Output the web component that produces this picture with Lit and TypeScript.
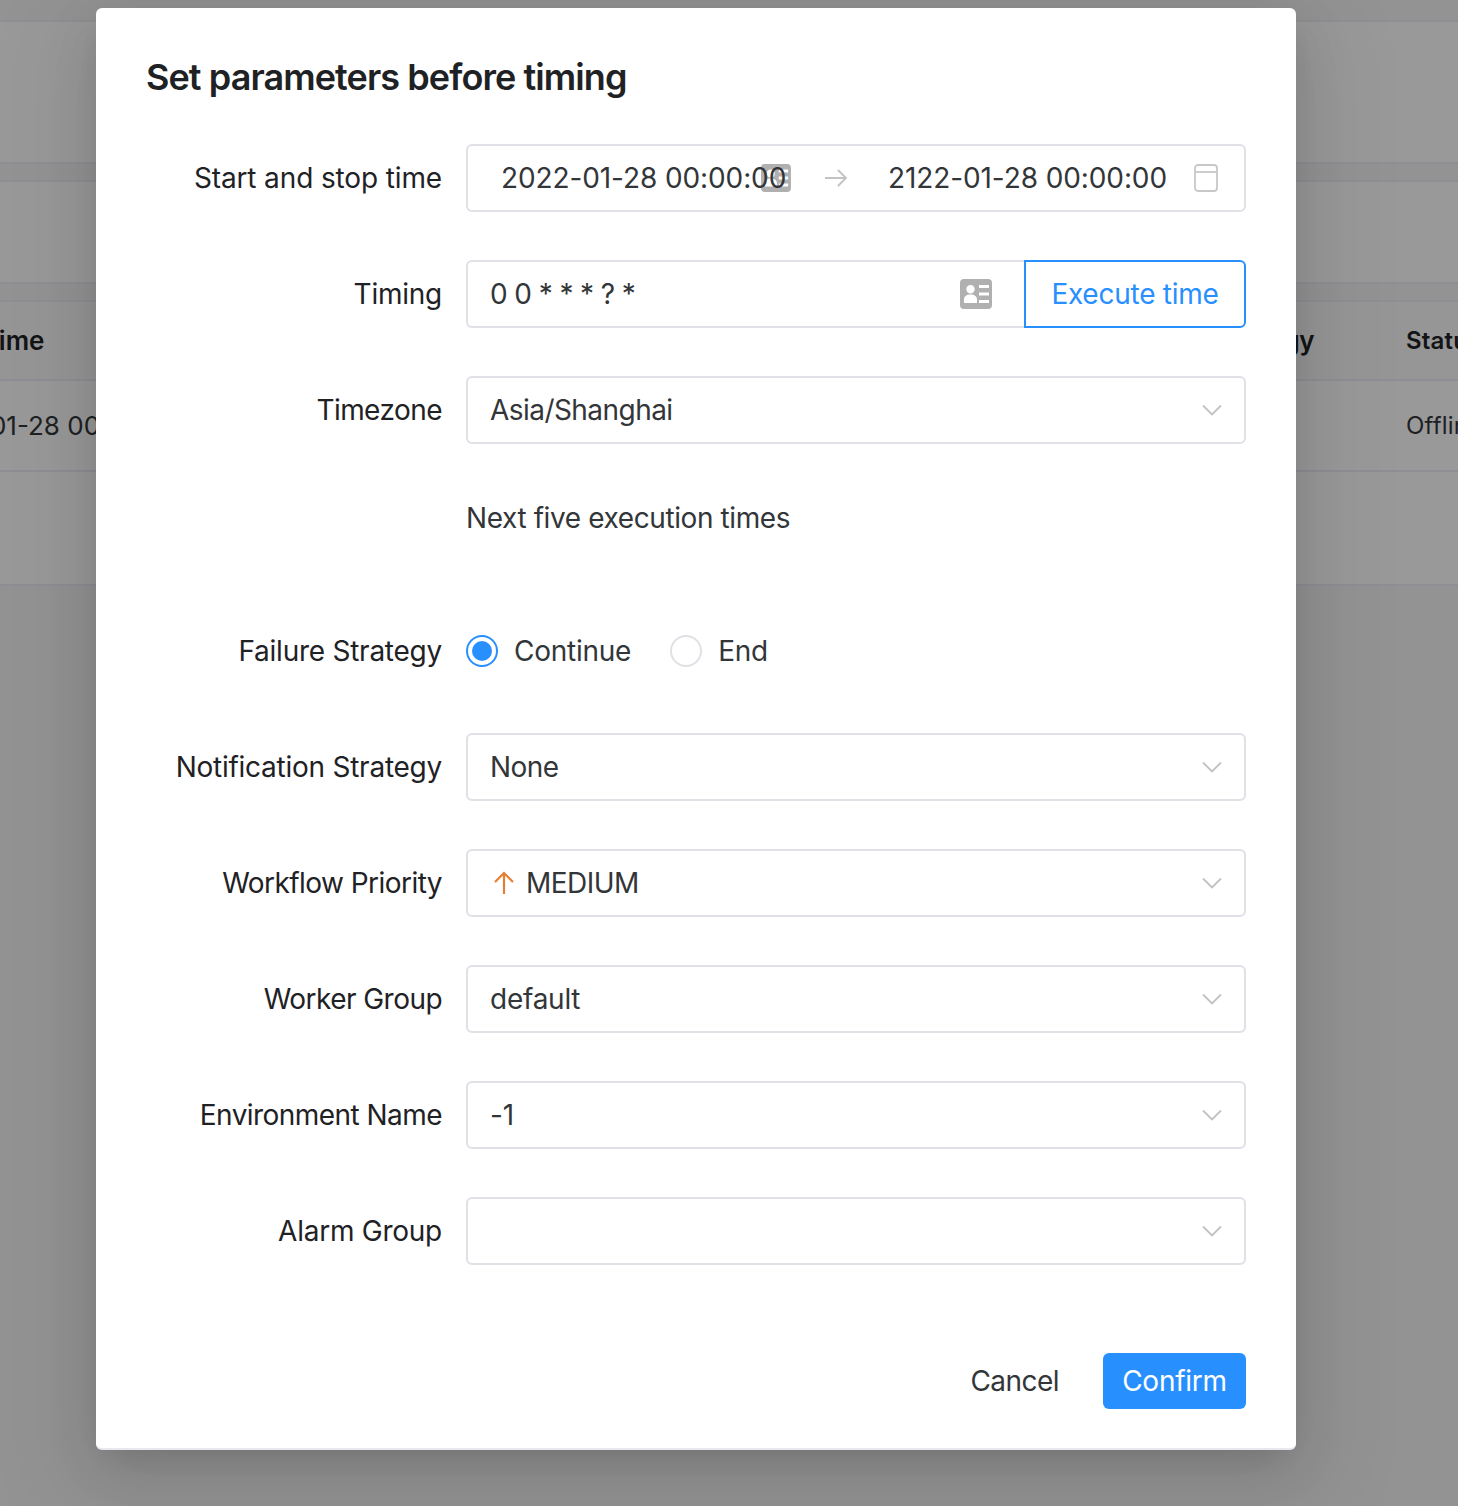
import { LitElement, html, css } from "lit";
import { customElement } from "lit/decorators.js";

const chevron = html`<svg class="chev" viewBox="0 0 20 12" fill="none" stroke="#c2c2c2" stroke-width="1.8"><path d="M1 1.5l9 9 9-9"/></svg>`;
const card = (cls: string) => html`<svg class=${cls} viewBox="0 0 32 30"><path fill="#b0b0b0" fill-rule="evenodd" d="M4 0h24a4 4 0 0 1 4 4v22a4 4 0 0 1-4 4H4a4 4 0 0 1-4-4V4a4 4 0 0 1 4-4zM10.500 6a4.200 4.200 0 1 0 0 8.400 4.200 4.200 0 0 0 0-8.400zM4 24h13v-3.500c0-3-2.500-5-6.500-5s-6.500 2-6.500 5zM19 6v3h10V6zM19 13.500v3h10v-3zM19 21v3h10v-3z"/></svg>`;

@customElement("app-root")
export class AppRoot extends LitElement {
  static styles = css`
    :host { display: block; position: relative; width: 1458px; height: 1506px; overflow: hidden; background: #f5f5f7;
      font-family: Inter, "Liberation Sans", sans-serif; font-size: 28px; color: #333639; letter-spacing: -.25px; }
    .bg { display: flex; flex-direction: column; gap: 16px; padding-top: 20px; font-size: 26px; letter-spacing: 0; }
    .band { background: #fff; border-top: 2px solid #efeff5; border-bottom: 2px solid #efeff5; }
    .b1 { height: 140px; }
    .b2 { height: 100px; }
    .b3 { height: 282px; }
    .tr { display: flex; align-items: center; margin-left: -86px; white-space: nowrap; }
    .tr.head { height: 79px; padding-bottom: 1px; font-weight: 600; color: #1f2225; background: #fafafc; border-bottom: 2px solid #efeff5; box-sizing: border-box; }
    .tr.body { height: 91px; border-bottom: 2px solid #efeff5; box-sizing: border-box; }
    .c1 { width: 1190px; flex: none; }
    .c2 { width: 302px; flex: none; }
    .c3 { flex: none; font-size: 24px; letter-spacing: .2px; }
    .head .c2 { text-align: right; width: 210px; margin-right: 92px; letter-spacing: -.6px; }
    .overlay { position: absolute; inset: 0; background: rgba(0,0,0,.4); }
    .modal { box-sizing: border-box; width: 1200px; height: 1442px; margin: 8px 0 0 96px; background: #fff; border-radius: 6px; padding: 0 50px;
      border-bottom: 2px solid #e8e8ee;
      box-shadow: 0 12px 32px -18px rgba(0,0,0,.16), 0 18px 56px 0 rgba(0,0,0,.10), 0 24px 96px 32px rgba(0,0,0,.06); display: flex; flex-direction: column; }
    h2 { margin: 0; height: 136px; padding-top: 45px; box-sizing: border-box; font-size: 36px; line-height: 48px; font-weight: 600; color: #1f2225; letter-spacing: -.92px; white-space: nowrap; }
    .row { display: flex; margin-bottom: 48px; }
    .label { width: 320px; flex: none; text-align: right; padding-right: 24px; box-sizing: border-box; line-height: 68px; color: #1f2225; white-space: nowrap; }
    .main { flex: 1; min-width: 0; position: relative; }
    .input { box-sizing: border-box; height: 68px; border: 2px solid #e0e0e6; border-radius: 6px; display: flex; align-items: center; padding: 0 22px; white-space: nowrap; }
    .select { justify-content: space-between; padding-right: 22px; }
    .chev { width: 20px; height: 12px; flex: none; }
    .range { padding: 0 26px 0 33px; letter-spacing: -.1px; }
    .range .from { width: 323px; flex: none; position: relative; z-index: 1; }
    .range .arrow { width: 24px; height: 20px; flex: none; margin-right: 40px; }
    .range .to { width: 306px; flex: none; }
    .cal { width: 24px; height: 28px; flex: none; }
    .over-ic { position: absolute; left: 294px; top: 20px; width: 32px; height: 28px; }
    .group { display: flex; }
    .group .input { flex: 1; border-radius: 6px 0 0 6px; border-right: 0; justify-content: space-between; padding-right: 32px; }
    .ic { width: 32px; height: 30px; flex: none; }
    .btn-exec { box-sizing: border-box; width: 222px; height: 68px; flex: none; border: 2px solid #288fff; border-radius: 0 6px 6px 0; color: #288fff; display: flex; align-items: center; justify-content: center; }
    .note { height: 77px; line-height: 52px; letter-spacing: -.4px; }
    .tight { letter-spacing: -.55px; }
    .wide { letter-spacing: -.13px; }
    .cron { letter-spacing: -.6px; }
    .radios { display: flex; align-items: center; height: 68px; }
    .radio { display: flex; align-items: center; gap: 16px; margin-right: 39px; }
    .dot { box-sizing: border-box; width: 32px; height: 32px; border-radius: 50%; border: 2px solid #e0e0e6; display: flex; align-items: center; justify-content: center; }
    .dot.on { border-color: #288fff; }
    .dot.on::after { content: ""; width: 20px; height: 20px; border-radius: 50%; background: #288fff; }
    .up { width: 28px; height: 24px; flex: none; margin-right: 8px; }
    .val { display: flex; align-items: center; }
    .foot { display: flex; justify-content: flex-end; align-items: center; gap: 44px; margin-top: 40px; }
    .cancel { line-height: 56px; letter-spacing: -.55px; }
    .confirm { box-sizing: border-box; width: 143px; height: 56px; background: #288fff; color: #fff; border-radius: 6px; display: flex; align-items: center; justify-content: center; }
  `;

  private select(label: string, value: unknown, labelCls = "", valCls = "") {
    return html`<div class="row"><div class="label ${labelCls}">${label}</div><div class="main"><div class="input select"><span class="val ${valCls}">${value}</span>${chevron}</div></div></div>`;
  }

  render() {
    return html`
      <div class="bg">
        <div class="band b1"></div>
        <div class="band b2"></div>
        <div class="band b3">
          <div class="tr head"><span class="c1">Start Time</span><span class="c2">Failure Strategy</span><span class="c3">Status</span></div>
          <div class="tr body"><span class="c1">2022-01-28 00:00:00</span><span class="c2">Continue</span><span class="c3">Offline</span></div>
        </div>
      </div>
      <div class="overlay">
        <div class="modal">
          <h2>Set parameters before timing</h2>
          <div class="row">
            <div class="label wide">Start and stop time</div>
            <div class="main">
              ${card("over-ic")}
              <div class="input range">
                <span class="from">2022-01-28 00:00:00</span>
                <svg class="arrow" viewBox="0 0 24 20" fill="none" stroke="#c2c2c2" stroke-width="1.8"><path d="M1 10h21M14 2l8 8-8 8"/></svg>
                <span class="to">2122-01-28 00:00:00</span>
                <svg class="cal" viewBox="0 0 24 28" fill="none" stroke="#c8c8c8" stroke-width="1.8"><rect x="1" y="1" width="22" height="26" rx="3"/><path d="M1 8h22"/></svg>
              </div>
            </div>
          </div>
          <div class="row">
            <div class="label">Timing</div>
            <div class="main group">
              <div class="input"><span class="cron">0 0 * * * ? *</span>${card("ic")}</div>
              <div class="btn-exec">Execute time</div>
            </div>
          </div>
          ${this.select("Timezone", "Asia/Shanghai", "tight", "tight")}
          <div class="row">
            <div class="label"></div>
            <div class="main note">Next five execution times</div>
          </div>
          <div class="row">
            <div class="label">Failure Strategy</div>
            <div class="main radios">
              <div class="radio"><span class="dot on"></span>Continue</div>
              <div class="radio"><span class="dot"></span>End</div>
            </div>
          </div>
          ${this.select("Notification Strategy", "None", "", "tight")}
          ${this.select("Workflow Priority", html`<svg class="up" viewBox="0 0 28 24" fill="none" stroke="#e67e33" stroke-width="2.2"><path d="M14 23V2M5 11l9-9 9 9"/></svg>MEDIUM`, "tight", "tight")}
          ${this.select("Worker Group", "default", "tight")}
          ${this.select("Environment Name", "-1", "tight")}
          ${this.select("Alarm Group", "")}
          <div class="foot">
            <span class="cancel">Cancel</span>
            <span class="confirm">Confirm</span>
          </div>
        </div>
      </div>
    `;
  }
}
